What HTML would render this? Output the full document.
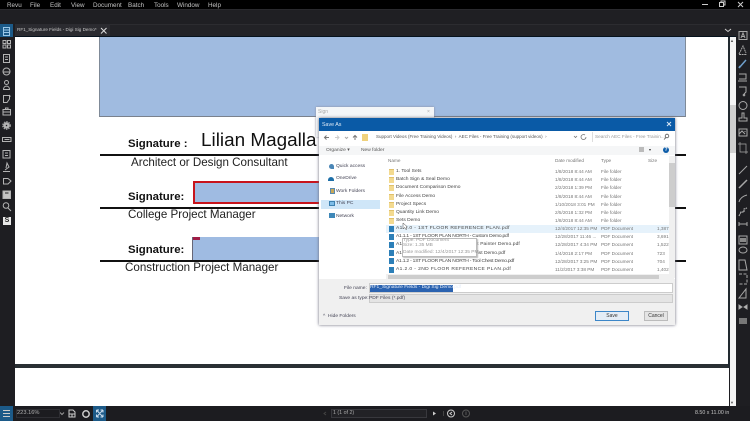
<!DOCTYPE html>
<html><head><meta charset="utf-8"><style>
html,body{margin:0;padding:0;background:#000}
#p{position:relative;width:750px;height:421px;overflow:hidden;background:#1e1e22;font-family:"Liberation Sans",sans-serif;filter:blur(.3px)}
#p div,#p span.a{position:absolute;white-space:nowrap}
.m{top:1px;font-size:6.3px;line-height:9px;color:#c4c4c4}
.s{font-weight:bold;font-size:11.4px;color:#111;line-height:16px}
.r{font-size:11.6px;color:#222;line-height:16px}
.l{left:100px;width:586px;height:1.6px;background:#111}
.t{font-size:4.9px;line-height:8px;color:#444}
.g{font-size:4.7px;line-height:8px;color:#777}
.n{font-size:4.9px;line-height:8px;color:#445}
.f{left:389px;width:5px;height:6px;background:#f3da90;border-top:1px solid #e0c06a;box-sizing:border-box}
.d{left:389px;width:5px;height:6px;background:#2c7fb8}
</style></head><body><div id="p">
<div style="left:0;top:0;width:750px;height:9px;background:#000"></div>
<div class="m" style="left:7px">Revu</div><div class="m" style="left:30px">File</div><div class="m" style="left:50px">Edit</div><div class="m" style="left:71px">View</div><div class="m" style="left:93px">Document</div><div class="m" style="left:128px">Batch</div><div class="m" style="left:154px">Tools</div><div class="m" style="left:177px">Window</div><div class="m" style="left:208px">Help</div>
<svg style="position:absolute;left:700px;top:0" width="50" height="9" fill="none" stroke="#ccc"><path d="M2 4.500H8"/><rect x="19.500" y="2.500" width="4" height="4"/><path d="M21 2V1H25V5H24"/><path d="M38 2L43 7M43 2L38 7"/></svg>
<div style="left:0;top:9px;width:750px;height:15px;background:#1f1f23;border-top:1px solid #2a2a2e;box-sizing:border-box"></div>
<div style="left:0;top:24px;width:750px;height:12px;background:#222226;border-top:1px solid #2c2c30;box-sizing:border-box"></div>
<div style="left:0;top:36px;width:750px;height:1px;background:#06121d"></div>
<div style="left:14px;top:24px;width:96px;height:12px;background:#2b2b30"></div>
<div style="left:17px;top:26px;font-size:4.6px;line-height:8px;color:#c8c8c8">RF1_Signature Fields - Digi Sig Demo*</div>
<svg style="position:absolute;left:100px;top:27px" width="8" height="8" stroke="#ddd" fill="none"><path d="M1 1L6.500 6.500M6.500 1L1 6.500"/></svg>
<svg style="position:absolute;left:724px;top:28px" width="8" height="5" stroke="#ccc" fill="none"><path d="M1 1L4 3.500L7 1"/></svg>

<!-- canvas -->
<div style="left:15px;top:37px;width:714px;height:369px;background:#fff"></div>
<div style="left:15px;top:364px;width:714px;height:3.500px;background:#2a3034"></div>
<div style="left:728px;top:37px;width:1.500px;height:331px;background:#222a30"></div>
<div style="left:98.500px;top:37px;width:587px;height:80px;background:#a0bbe0;border-left:1px solid #7f8a98;border-right:1px solid #7f8a98;border-bottom:1.500px solid #7a818c;box-sizing:border-box"></div>
<div class="s" style="left:128px;top:136px">Signature :</div>
<div style="left:201px;top:127px;font-size:18.900px;line-height:28px;color:#111">Lilian Magalla</div>
<div class="l" style="top:154px"></div>
<div class="r" style="left:131px;top:155px">Architect or Design Consultant</div>
<div class="s" style="left:128px;top:189px">Signature:</div>
<div style="left:193px;top:180.500px;width:130px;height:23px;background:#9fbbe2;border:2px solid #c8141c;box-sizing:border-box"></div>
<div class="l" style="top:207px"></div>
<div class="r" style="left:128px;top:207px">College Project Manager</div>
<div class="s" style="left:128px;top:242px">Signature:</div>
<div style="left:192px;top:237px;width:131px;height:23px;background:#9fbbe2;border-left:1px solid #667"></div>
<div style="left:193px;top:237px;width:7px;height:2.500px;background:#a01c45"></div>
<div class="l" style="top:260px"></div>
<div class="r" style="left:125px;top:260px">Construction Project Manager</div>

<!-- scrollbar -->
<div style="left:729.500px;top:37px;width:6px;height:369px;background:#f4f4f4"></div>
<div style="left:730px;top:105px;width:5.500px;height:48px;background:#cfcfcf"></div>
<div style="left:730px;top:38px;font-size:4px;line-height:6px;color:#555">▲</div>
<div style="left:730px;top:400px;font-size:4px;line-height:6px;color:#555">▼</div>
<div style="left:735.500px;top:36px;width:14.500px;height:385px;background:#1e1e22"></div>
<div style="left:14px;top:406px;width:722px;height:1px;background:#777"></div>

<!-- left bar -->
<div style="left:0;top:24px;width:14.500px;height:382px;background:#1e1e22"></div>
<div style="left:0;top:24px;width:13px;height:13px;background:#1c5a88"></div>
<svg style="position:absolute;left:0;top:24px" width="15" height="205" fill="none" stroke="#b4b4b4" stroke-width="1">
<path d="M3.500 3.500H9.500V11.500H3.500ZM3.500 6H9.500M3.500 8.500H9.500" stroke="#9cc8e8"/>
<path d="M3 16.500H6V19.500H3ZM7.500 16.500H10.500V19.500H7.500ZM3 21H6V24H3ZM7.500 21H10.500V24H7.500Z"/>
<path d="M3.500 30.500H9.500V38.500H3.500ZM5 33H8M5 35.500H8"/>
<circle cx="6.500" cy="47.500" r="3.500"/><path d="M3 48H10"/>
<circle cx="6.500" cy="58.500" r="2"/><path d="M3.500 65.500C3.500 61 9.500 61 9.500 65.500Z"/>
<path d="M3.500 71.500H9.500V75L7 78.500H3.500ZM9 71L10.500 72.500"/>
<path d="M3 85.500H10.500V91H3ZM5.500 85.500V84H8V85.500M3 88H10.500"/>
<circle cx="6.500" cy="101.500" r="2" stroke-width="2.500"/><circle cx="6.500" cy="101.500" r="3.800" stroke-dasharray="1.500 1"/>
<path d="M2.500 113.500H11V117.500H2.500ZM4.500 115.500H9.500"/>
<path d="M3 126.500H10V134H3ZM5 129H8M5 131.500H8"/>
<path d="M3 147.500H10M6 144L7 139L9 143L5 146"/>
<path d="M3.500 154.500H8L11 157L8 160H3.500Z"/>
<path d="M3 167H10.500V174.500H3Z" fill="#c4c4c4"/><path d="M5 169H8.500" stroke="#222"/>
<circle cx="6" cy="181.500" r="2.800"/><path d="M8 184L11 187"/>
</svg>
<div style="left:3px;top:217px;width:8px;height:8px;background:#e8e8e8;color:#222;font-size:7px;font-weight:bold;line-height:8px;text-align:center">S</div>

<!-- right bar -->
<svg style="position:absolute;left:736px;top:28px" width="14" height="320" fill="none" stroke="#a8a8a8" stroke-width="1">
<path d="M3 3.500H11V11.500H3Z"/><path d="M5 10L7 5L9 10M5.800 8.500H8.200"/>
<path d="M3 26L7 18L10 25M3 26.500H11" stroke-dasharray="2 .6"/>
<path d="M3 40L10 32M3 40L4 38" stroke="#6f9fcb" stroke-width="1.500"/>
<path d="M3 46H10V51H3M2 53H11" /><path d="M3 59H10V64L8 66M3 59"/><circle cx="8" cy="67" r=".8"/>
<circle cx="7" cy="77.500" r="4"/>
<path d="M6 85H8V90H11V93H3V90H6Z"/>
<path d="M3 101H11V108H3ZM3 106L6 103L9 106M8.500 103.500H9.500"/>
<path d="M4 114V124H12M2 116H10V126" stroke-width=".7"/>
<path d="M3 146L11 138"/><path d="M3 160L8 155M8 155L11 152" stroke-width="1.500"/><path d="M3 174C4 170 7 168 11 167"/><path d="M3 188L5 184H8V181L11 180" stroke-dasharray="2 .5" stroke-width="1.200"/>
<path d="M3 194V198M11 194V198M3 196H11"/><path d="M3 208H11V216H3Z"/><rect x="4" y="210" width="6" height="4" fill="#888" stroke="none"/>
<ellipse cx="7" cy="222" rx="4" ry="3"/><path d="M3 232H9L11 242H3Z"/>
<path d="M3 246H11V256H3" stroke-dasharray="3 1.500"/><path d="M3 270L10 261V270Z"/>
<path d="M3 277V281L6 279ZM11 277V281L8 279Z" fill="#bbb"/>
<rect x="3" y="290" width="8" height="6" fill="#777" stroke="none"/>
</svg>

<!-- status bar -->
<div style="left:0;top:406px;width:750px;height:15px;background:#1c1c20"></div>
<div style="left:0;top:406px;width:13px;height:15px;background:#1c5a88"></div>
<svg style="position:absolute;left:0;top:406px" width="110" height="15" fill="none" stroke="#ccc"><path d="M3 4.500H10M3 7.500H10M3 10.500H10"/><path d="M60 6.500L62 8.500L64 6.500" stroke="#999"/><path d="M69 4H73L75 6V11H69ZM69 8H75M72 8V11"/><circle cx="86" cy="8" r="3.200" stroke-width="1.500"/></svg>
<div style="left:93px;top:406px;width:13px;height:15px;background:#1c5a88"></div>
<svg style="position:absolute;left:93px;top:406px" width="13" height="15" fill="none" stroke="#cde"><path d="M3.500 4H6M7.500 4H10M3.500 11H6M7.500 11H10M3.500 4V6.500M10 4V6.500M3.500 11V8.500M10 11V8.500M4 4.500L9.500 10.500M9.500 4.500L4 10.500"/></svg>
<div style="left:16px;top:409px;width:44px;height:9px;border:1px solid #2e2e33;box-sizing:border-box"></div>
<div style="left:17px;top:409px;font-size:5.700px;line-height:9px;color:#b0b0b0">223.16%</div>
<div style="left:331px;top:408.500px;width:96px;height:9px;border:1px solid #38383d;background:#222226;box-sizing:border-box"></div>
<div style="left:333px;top:409px;font-size:5.300px;line-height:8px;color:#aaa">1 (1 of 2)</div>
<svg style="position:absolute;left:322px;top:406px" width="155" height="15" fill="none"><path d="M4 6L2 7.500L4 9" stroke="#444"/><path d="M111 5.500L114 7.500L111 9.500Z" fill="#ccc"/><path d="M121.500 5V10" stroke="#444"/><circle cx="129" cy="7.500" r="3.500" stroke="#ccc"/><path d="M130 6L128 7.500L130 9" stroke="#ccc"/><circle cx="144" cy="7.500" r="3.500" stroke="#555"/><path d="M144 5.500V9" stroke="#555"/></svg>
<div style="left:695px;top:409px;font-size:5.300px;line-height:8px;color:#c4c4c4">8.50 x 11.00 in</div>

<!-- Sign dialog -->
<div style="left:316px;top:107px;width:118px;height:30px;background:#f4f6f8;box-shadow:0 0 2px #889"></div>
<div style="left:318px;top:109px;font-size:5px;line-height:7px;color:#aaa">Sign</div>
<div style="left:427px;top:109px;font-size:5px;line-height:7px;color:#aaa">×</div>

<!-- Save as -->
<div style="left:318.500px;top:118px;width:356.500px;height:207px;background:#fff;box-shadow:0 0 3px #667"></div>
<div style="left:318.500px;top:118px;width:356.500px;height:13px;background:#0a5aa6"></div>
<div style="left:322px;top:120.500px;font-size:5.300px;line-height:8px;color:#dfeaf5">Save As</div>
<svg style="position:absolute;left:666px;top:121px" width="6" height="6" stroke="#d8e6f4" fill="none"><path d="M1 1L5 5M5 1L1 5"/></svg>
<div style="left:319px;top:131px;width:356px;height:15px;background:#fff"></div>
<div style="left:319px;top:146px;width:356px;height:9px;background:#f5f6f7"></div>
<svg style="position:absolute;left:323px;top:132px" width="40" height="12" fill="none" stroke="#777"><path d="M6 5.500H1.500M3.500 3.500L1.500 5.500L3.500 7.500"/><path d="M16 5.500H12M14 3.500L16 5.500L14 7.500" stroke="#ccc"/><path d="M22 5L23.500 6.500L25 5" stroke="#aaa"/><path d="M32 8V3.500M30 5.500L32 3.500L34 5.500"/></svg>
<div style="left:362px;top:134px;width:6px;height:7px;background:#f0d27c"></div>
<div class="n" style="left:376px;top:133px;color:#555;font-size:4.500px">Support Videos (Free Training Videos) &nbsp;›&nbsp; AEC Files - Free Training (support videos) &nbsp;›</div>
<svg style="position:absolute;left:573px;top:133px" width="15" height="8" fill="none" stroke="#777" stroke-width=".8"><path d="M1 3L2.500 4.500L4 3"/><path d="M12 2A2.500 2.500 0 1 0 13 4"/></svg>
<div style="left:592px;top:132px;width:78px;height:10px;border-left:1px solid #ddd"></div>
<div class="g" style="left:595px;top:133px;color:#999">Search AEC Files - Free Trainin...</div>
<svg style="position:absolute;left:663px;top:133px" width="7" height="7" fill="none" stroke="#555" stroke-width=".8"><circle cx="4" cy="3" r="1.800"/><path d="M3 4.500L1 6.500"/></svg>
<div class="n" style="left:326px;top:146.500px;color:#555">Organize ▾</div>
<div class="n" style="left:361px;top:146.500px;color:#555">New folder</div>
<div style="left:639px;top:147px;width:5px;height:5px;background:#bbb"></div>
<div style="left:649px;top:147px;font-size:4px;line-height:6px;color:#333">▾</div>
<div style="left:663px;top:147px;width:6px;height:6px;border-radius:50%;background:#0c5ca8;color:#fff;font-size:5px;line-height:6px;text-align:center;font-weight:bold">?</div>

<!-- nav -->
<div style="left:321px;top:199.500px;width:59px;height:9px;background:#cfe6f8"></div>
<div class="n" style="left:336px;top:163px">Quick access</div>
<div class="n" style="left:336px;top:175px">OneDrive</div>
<div class="n" style="left:336px;top:187.500px">Work Folders</div>
<div class="n" style="left:336px;top:200px">This PC</div>
<div class="n" style="left:336px;top:212.500px">Network</div>
<div style="left:329px;top:164px;width:5px;height:5px;background:#4b86b6;border-radius:50% 50% 0 50%"></div>
<div style="left:328px;top:177px;width:6px;height:4px;background:#1d6fa8;border-radius:3px 3px 0 0"></div>
<div style="left:330px;top:188px;width:5px;height:6px;background:#c8a858;border:1px solid #5a8ab0;box-sizing:border-box"></div>
<div style="left:329px;top:201px;width:6px;height:5px;background:#7ebde8;border:1px solid #3c80b0;box-sizing:border-box"></div>
<div style="left:329px;top:213px;width:6px;height:5px;background:#3f88b8"></div>

<!-- file list -->
<div class="g" style="left:388px;top:157px">Name</div>
<div class="g" style="left:555px;top:157px">Date modified</div>
<div class="g" style="left:601px;top:157px">Type</div>
<div class="g" style="left:648px;top:157px">Size</div>
<div style="left:386px;top:225px;width:283px;height:8px;background:#e6f2fb"></div>

<div class="f" style="top:169px"></div><div class="t" style="left:396px;top:168px">1. Tool Sets</div><div class="g" style="left:555px;top:168px">1/8/2018 8:44 AM</div><div class="g" style="left:601px;top:168px">File folder</div>
<div class="f" style="top:177px"></div><div class="t" style="left:396px;top:176px">Batch Sign &amp; Seal Demo</div><div class="g" style="left:555px;top:176px">1/8/2018 8:44 AM</div><div class="g" style="left:601px;top:176px">File folder</div>
<div class="f" style="top:185px"></div><div class="t" style="left:396px;top:184px">Document Comparison Demo</div><div class="g" style="left:555px;top:184px">2/2/2018 1:39 PM</div><div class="g" style="left:601px;top:184px">File folder</div>
<div class="f" style="top:194px"></div><div class="t" style="left:396px;top:193px">File Access Demo</div><div class="g" style="left:555px;top:193px">1/8/2018 8:44 AM</div><div class="g" style="left:601px;top:193px">File folder</div>
<div class="f" style="top:202px"></div><div class="t" style="left:396px;top:201px">Project Specs</div><div class="g" style="left:555px;top:201px">1/10/2018 3:01 PM</div><div class="g" style="left:601px;top:201px">File folder</div>
<div class="f" style="top:210px"></div><div class="t" style="left:396px;top:209px">Quantity Link Demo</div><div class="g" style="left:555px;top:209px">2/5/2018 1:32 PM</div><div class="g" style="left:601px;top:209px">File folder</div>
<div class="f" style="top:218px"></div><div class="t" style="left:396px;top:217px">Sets Demo</div><div class="g" style="left:555px;top:217px">1/8/2018 8:44 AM</div><div class="g" style="left:601px;top:217px">File folder</div>

<div class="d" style="top:226px"></div><div class="t" style="left:396px;top:225px;letter-spacing:.39px">A1.1.0 - 1ST FLOOR  REFERENCE PLAN.pdf</div><div class="g" style="left:555px;top:225px">12/4/2017 12:35 PM</div><div class="g" style="left:601px;top:225px">PDF Document</div><div class="g" style="left:657px;top:225px">1,387</div>
<div class="d" style="top:234px"></div><div class="t" style="left:396px;top:233px;letter-spacing:-.2px">A1.1.1 - 1ST FLOOR PLAN NORTH - Custom Demo.pdf</div><div class="g" style="left:555px;top:233px">12/28/2017 11:46 ...</div><div class="g" style="left:601px;top:233px">PDF Document</div><div class="g" style="left:657px;top:233px">3,691</div>
<div class="d" style="top:242px"></div><div class="t" style="left:396px;top:241px;letter-spacing:.1px">A1.1.1 - 1ST FLOOR PLAN - Format Painter Demo.pdf</div><div class="g" style="left:555px;top:241px">12/28/2017 4:34 PM</div><div class="g" style="left:601px;top:241px">PDF Document</div><div class="g" style="left:657px;top:241px">1,522</div>
<div class="d" style="top:250px"></div><div class="t" style="left:396px;top:249.500px">A1.1.1 - 1ST FLOOR PLAN - Group List Demo.pdf</div><div class="g" style="left:555px;top:249.500px">1/4/2018 2:17 PM</div><div class="g" style="left:601px;top:249.500px">PDF Document</div><div class="g" style="left:657px;top:249.500px">723</div>
<div class="d" style="top:258px"></div><div class="t" style="left:396px;top:258px;letter-spacing:-.2px">A1.1.2 - 1ST FLOOR PLAN NORTH - Tool Chest Demo.pdf</div><div class="g" style="left:555px;top:258px">12/28/2017 3:25 PM</div><div class="g" style="left:601px;top:258px">PDF Document</div><div class="g" style="left:657px;top:258px">704</div>
<div class="d" style="top:267px"></div><div class="t" style="left:396px;top:266px;letter-spacing:.4px">A1.2.0 - 2ND FLOOR  REFERENCE PLAN.pdf</div><div class="g" style="left:555px;top:266px">11/2/2017 3:38 PM</div><div class="g" style="left:601px;top:266px">PDF Document</div><div class="g" style="left:657px;top:266px">1,402</div>

<!-- tooltip -->
<div style="left:401.500px;top:237.500px;width:75px;height:19px;background:#fff;border:1px solid #bbb;box-sizing:border-box;box-shadow:1px 1px 1px #bbb"></div>
<div class="g" style="left:403px;top:236.800px;font-size:4.800px;color:#999">Type: PDF Document</div>
<div class="g" style="left:403px;top:242px;font-size:4.800px;color:#999">Size: 1.35 MB</div>
<div class="g" style="left:403px;top:248.500px;font-size:4.800px;color:#999">Date modified: 12/4/2017 12:35 PM</div>
<svg style="position:absolute;left:402px;top:222px" width="6" height="9"><path d="M1 1V7L2.500 5.500L4 7.500L5 7L4 5H5.500Z" fill="#fff" stroke="#444" stroke-width=".5"/></svg>

<!-- scrollbars -->
<div style="left:669px;top:156px;width:5.500px;height:122px;background:#f0f0f0"></div>
<div style="left:669px;top:163px;width:5.500px;height:44px;background:#cdcdcd"></div>
<div style="left:386px;top:274px;width:288px;height:5px;background:#f0f0f0"></div>
<div style="left:388px;top:274.500px;width:271px;height:4px;background:#cdcdcd"></div>

<!-- bottom -->
<div style="left:319px;top:279px;width:356px;height:46px;background:#f0f0f0"></div>
<div class="n" style="left:344px;top:285px">File name:</div>
<div class="n" style="left:339px;top:295px">Save as type:</div>
<div style="left:368.500px;top:283px;width:304px;height:10px;background:#fff;border:1px solid #ccc;box-sizing:border-box"></div>
<div style="left:370px;top:284.500px;width:83px;height:7px;background:#2a62b0"></div>
<div style="left:370px;top:284px;font-size:4.900px;line-height:8px;color:#e4ecf8">RF1_Signature Fields - Digi Sig Demo.pdf</div>
<div style="left:368.500px;top:294px;width:304px;height:9px;background:#e4e4e4;border:1px solid #ccc;box-sizing:border-box"></div>
<div class="n" style="left:369px;top:295px">PDF Files (*.pdf)</div>
<div class="n" style="left:323px;top:312.500px">^ &nbsp;Hide Folders</div>
<div style="left:595px;top:311px;width:34px;height:9.500px;background:#e4edf6;border:1px solid #3c86c8;box-sizing:border-box;font-size:5px;line-height:8px;text-align:center;color:#333">Save</div>
<div style="left:644px;top:311px;width:24px;height:9.500px;background:#e4e4e4;border:1px solid #bbb;box-sizing:border-box;font-size:5px;line-height:8px;text-align:center;color:#333">Cancel</div>
</div></body></html>
